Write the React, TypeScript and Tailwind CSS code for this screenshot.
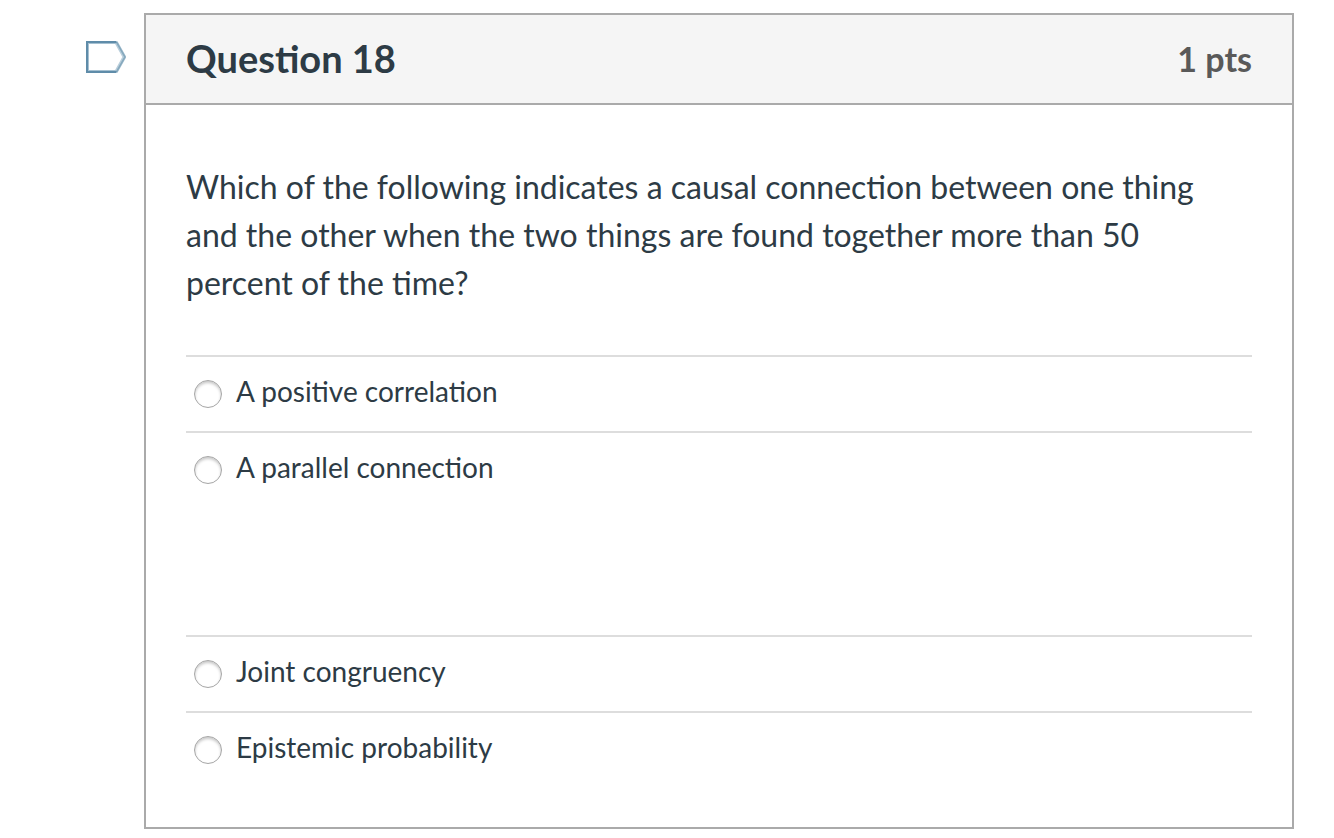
import React from "react";

type Answer = { id: string; label: string; spacious?: boolean };

const answers: Answer[] = [
  { id: "a", label: "A positive correlation" },
  { id: "b", label: "A parallel connection", spacious: true },
  { id: "c", label: "Joint congruency" },
  { id: "d", label: "Epistemic probability" },
];

function AnswerRow({ answer }: { answer: Answer }) {
  return (
    <div
      className={
        answer.spacious
          ? "flex items-start border-t-2 border-[#dddddd] pt-4 pb-[150px] pl-2"
          : "flex items-start border-t-2 border-[#dddddd] pt-4 pb-[22px] pl-2"
      }
    >
      <input
        type="radio"
        id={answer.id}
        name="answer"
        className="mt-[7px] size-7 shrink-0 appearance-none rounded-full border border-[#a6a6a6] bg-white shadow-[inset_0_2px_3px_rgba(0,0,0,0.22)] checked:bg-[#2b7abc]"
      />
      <label htmlFor={answer.id} className="pl-[14px] text-[28px] leading-9">
        {answer.label}
      </label>
    </div>
  );
}

function FlagIcon() {
  return (
    <svg width="40" height="32" viewBox="0 0 40 32" fill="none" className="block">
      <path d="M30 1L38.3 16L30 31" stroke="#b9cedb" strokeWidth="3.6" />
      <path d="M30.5 1L39 16L30.5 31" stroke="#86a9be" strokeWidth="1.6" />
      <path d="M30 2.2H2.2V29.8H30" stroke="#a5c0d1" strokeWidth="1.6" />
      <path d="M30.5 1H1V31H30.5" stroke="#5f8ca9" strokeWidth="2" />
    </svg>
  );
}

export default function App() {
  return (
    <main className="flex items-start bg-white pt-[13px] pr-10 pb-[9px] pl-[86px] font-['Lato',sans-serif] text-[#2d3b45]">
      <button type="button" aria-label="Flag question" className="mt-7 mr-[18px] shrink-0">
        <FlagIcon />
      </button>
      <section className="min-w-0 flex-1 border-2 border-[#aaaaaa]">
        <header className="flex items-start justify-between border-b-2 border-[#aaaaaa] bg-[#f5f5f5] px-10 py-5">
          <h1 className="text-[38px] leading-[46px] font-bold">Question 18</h1>
          <span className="text-[34px] leading-12 font-bold text-[#595959]">1 pts</span>
        </header>
        <form className="px-10 pt-[58px] pb-10">
          <fieldset>
            <legend className="mb-12 text-[32px] leading-12">
              Which of the following indicates a causal connection between one thing and the other when the two
              things are found together more than 50 percent of the time?
            </legend>
            {answers.map((answer) => (
              <AnswerRow key={answer.id} answer={answer} />
            ))}
          </fieldset>
        </form>
      </section>
    </main>
  );
}
